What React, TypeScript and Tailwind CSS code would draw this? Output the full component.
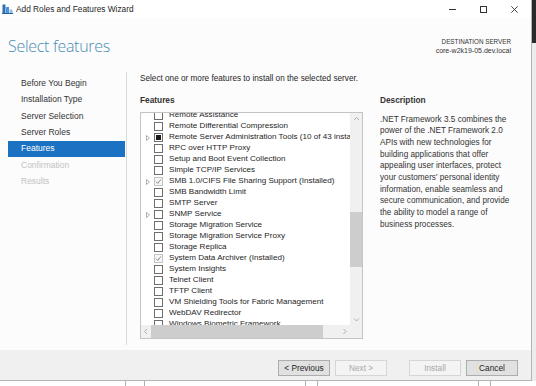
import React from 'react'

const steps = [
  { label: 'Before You Begin', state: 'done' },
  { label: 'Installation Type', state: 'done' },
  { label: 'Server Selection', state: 'done' },
  { label: 'Server Roles', state: 'done' },
  { label: 'Features', state: 'active' },
  { label: 'Confirmation', state: 'off' },
  { label: 'Results', state: 'off' },
]

type Feature = { label: string; expand?: boolean; check?: 'partial' | 'installed' }

const features: Feature[] = [
  { label: 'Remote Assistance' },
  { label: 'Remote Differential Compression' },
  { label: 'Remote Server Administration Tools (10 of 43 installed)', expand: true, check: 'partial' },
  { label: 'RPC over HTTP Proxy' },
  { label: 'Setup and Boot Event Collection' },
  { label: 'Simple TCP/IP Services' },
  { label: 'SMB 1.0/CIFS File Sharing Support (Installed)', expand: true, check: 'installed' },
  { label: 'SMB Bandwidth Limit' },
  { label: 'SMTP Server' },
  { label: 'SNMP Service', expand: true },
  { label: 'Storage Migration Service' },
  { label: 'Storage Migration Service Proxy' },
  { label: 'Storage Replica' },
  { label: 'System Data Archiver (Installed)', check: 'installed' },
  { label: 'System Insights' },
  { label: 'Telnet Client' },
  { label: 'TFTP Client' },
  { label: 'VM Shielding Tools for Fabric Management' },
  { label: 'WebDAV Redirector' },
  { label: 'Windows Biometric Framework' },
]

const description = [
  '.NET Framework 3.5 combines the',
  'power of the .NET Framework 2.0',
  'APIs with new technologies for',
  'building applications that offer',
  'appealing user interfaces, protect',
  "your customers' personal identity",
  'information, enable seamless and',
  'secure communication, and provide',
  'the ability to model a range of',
  'business processes.',
]

function Checkbox({ check }: { check?: 'partial' | 'installed' }) {
  if (check === 'installed') {
    return (
      <span className="flex h-[9px] w-[9px] shrink-0 items-center justify-center border border-[#c4c4c4] bg-[#f7f7f7]">
        <svg width="7" height="7" viewBox="0 0 7 7">
          <path d="M1 3.6 L2.8 5.4 L6 1.4" fill="none" stroke="#8a8a8a" strokeWidth="1" />
        </svg>
      </span>
    )
  }
  return (
    <span className="flex h-[9px] w-[9px] shrink-0 items-center justify-center border border-[#6e6e6e] bg-white">
      {check === 'partial' && <span className="h-[5px] w-[5px] bg-[#1a1a1a]" />}
    </span>
  )
}

function Chevron({ dir }: { dir: 'up' | 'down' | 'left' | 'right' }) {
  const d = {
    up: 'M1 4 L3.5 1.5 L6 4',
    down: 'M1 1.5 L3.5 4 L6 1.5',
    left: 'M4 1 L1.5 3.5 L4 6',
    right: 'M1.5 1 L4 3.5 L1.5 6',
  }[dir]
  const horiz = dir === 'left' || dir === 'right'
  return (
    <svg width={horiz ? 6 : 7} height={horiz ? 7 : 6} viewBox={horiz ? '0 0 6 7' : '0 0 7 6'}>
      <path d={d} fill="none" stroke="#a6a6a6" strokeWidth="0.9" />
    </svg>
  )
}

function WizardButton({ label, disabled }: { label: string; disabled?: boolean }) {
  return (
    <button
      className={`flex h-[16px] w-[52px] items-center justify-center border text-[8.3px] ${
        disabled ? 'border-[#d6d6d6] bg-[#f4f4f4] text-[#a8a8a8]' : 'border-[#adadad] bg-[#e1e1e1] text-[#1e1e1e]'
      }`}
    >
      {label}
    </button>
  )
}

export default function App() {
  return (
    <div className="flex h-[386px] w-[536px] flex-col overflow-hidden bg-white font-['Liberation_Sans',Arial,sans-serif] text-[#1e1e1e]">
      <div className="flex h-[381px]">
        {/* Window */}
        <div className="flex w-[532px] flex-col border-r border-b border-[#b4b4b4] bg-[#fcfcfc]">
          {/* Title bar */}
          <div className="flex h-[18px] items-center bg-white pl-[2px]">
            <svg width="11" height="10" viewBox="0 0 11 10" className="mr-[3px]">
              <rect x="0.5" y="0.5" width="3" height="9" fill="#2f6fb8" />
              <rect x="4" y="3" width="3" height="6.5" fill="#4e93d6" />
              <rect x="7.5" y="5.5" width="3" height="4" fill="#8cc0ec" />
              <rect x="0" y="9" width="11" height="1" fill="#2a5d99" />
            </svg>
            <span className="text-[8.3px] text-[#1e1e1e]">Add Roles and Features Wizard</span>
            <div className="ml-auto flex h-full items-center gap-[24px] pr-[13px]">
              <span className="h-[1px] w-[7px] bg-[#333]" />
              <span className="h-[7px] w-[7px] border border-[#333]" />
              <svg width="7" height="7" viewBox="0 0 7 7">
                <path d="M0.3 0.3 L6.7 6.7 M6.7 0.3 L0.3 6.7" stroke="#333" strokeWidth="0.9" />
              </svg>
            </div>
          </div>

          {/* Header */}
          <div className="flex h-[52px] items-start justify-between pl-[8px] pr-[20px]">
            <h1 className="pt-[19px] text-[16px] leading-[19px] font-light tracking-[-0.3px] text-[#4a8db5] font-['Open_Sans',sans-serif]">
              Select features
            </h1>
            <div className="pt-[20px] text-right text-[6.3px] leading-[8.5px] text-[#333]">
              <div>DESTINATION SERVER</div>
              <div className="text-[7px]">core-w2k19-05.dev.local</div>
            </div>
          </div>

          {/* Body */}
          <div className="flex h-[280px]">
            <nav className="mt-[2px] mb-[5px] w-[127px] border-r border-[#dadada] pt-[3px]">
              {steps.map((s) => (
                <div
                  key={s.label}
                  className={`ml-[8px] flex h-[16.4px] w-[117px] items-center pl-[13px] text-[8.5px] ${
                    s.state === 'active' ? 'bg-[#1c72c2] text-white' : s.state === 'off' ? 'text-[#c2c2c2]' : 'text-[#333]'
                  }`}
                >
                  {s.label}
                </div>
              ))}
            </nav>

            <div className="flex flex-1 flex-col pl-[13px]">
              <p className="mt-[3px] text-[8.2px] leading-[12px]">Select one or more features to install on the selected server.</p>
              <div className="mt-[9px] flex gap-[17px]">
                <div className="flex w-[223px] flex-col">
                  <div className="text-[8.3px] leading-[12px] font-bold text-[#333]">Features</div>
                  <div className="mt-[6px] flex h-[227px] flex-col border border-[#c4c4c4] bg-white">
                    <div className="flex flex-1 overflow-hidden">
                      <div className="flex-1 overflow-hidden">
                        <div className="mt-[-3px]">
                          {features.map((f) => (
                            <div key={f.label} className="flex h-[11px] items-center whitespace-nowrap">
                              <span className="flex w-[13px] shrink-0 justify-center pl-[1px]">
                                {f.expand && (
                                  <svg width="4" height="6" viewBox="0 0 4 6">
                                    <path d="M0.5 0.5 L3.5 3 L0.5 5.5 Z" fill="none" stroke="#9a9a9a" strokeWidth="0.8" />
                                  </svg>
                                )}
                              </span>
                              <Checkbox check={f.check} />
                              <span className="ml-[6px] text-[8.1px] text-[#1e1e1e]">{f.label}</span>
                            </div>
                          ))}
                        </div>
                      </div>
                      <div className="flex w-[12px] shrink-0 flex-col bg-[#f0f0f0]">
                        <div className="flex h-[11px] items-center justify-center">
                          <Chevron dir="up" />
                        </div>
                        <div className="mt-[88px] h-[55px] w-full bg-[#cdcdcd]" />
                        <div className="mt-auto flex h-[11px] items-center justify-center">
                          <Chevron dir="down" />
                        </div>
                      </div>
                    </div>
                    <div className="flex h-[13px] bg-[#f0f0f0]">
                      <div className="flex w-[10px] items-center justify-center">
                        <Chevron dir="left" />
                      </div>
                      <div className="w-[172px] bg-[#cdcdcd]" />
                      <div className="ml-auto mr-[12px] flex w-[11px] items-center justify-center">
                        <Chevron dir="right" />
                      </div>
                    </div>
                  </div>
                </div>

                <div className="flex flex-col">
                  <div className="text-[8.3px] leading-[12px] font-bold text-[#333]">Description</div>
                  <div className="mt-[7.5px] text-[8.2px] leading-[11.67px] whitespace-nowrap text-[#333]">
                    {description.map((line) => (
                      <div key={line}>{line}</div>
                    ))}
                  </div>
                </div>
              </div>
            </div>
          </div>

          {/* Footer */}
          <div className="flex flex-1 items-start justify-end bg-[#f0f0f0] pt-[10px] pr-[13px]">
            <div className="flex gap-[5px]">
              <WizardButton label="< Previous" />
              <WizardButton label="Next >" disabled />
            </div>
            <div className="ml-[22px] flex gap-[5px]">
              <WizardButton label="Install" disabled />
              <WizardButton label="Cancel" />
            </div>
          </div>
        </div>

        {/* Background window edge */}
        <div className="flex w-[4px] flex-col">
          <div className="h-[43px] bg-[#2a2a2a]" />
          <div className="flex-1 bg-[#ececec]" />
        </div>
      </div>

      {/* Background content below the window */}
      <div className="flex flex-1 bg-white">
        <div className="ml-[125px] w-px bg-[#b0b0b0]" />
        <div className="ml-[18px] w-px bg-[#b0b0b0]" />
        <div className="ml-[160px] w-px bg-[#b0b0b0]" />
        <div className="ml-[11px] w-px bg-[#b0b0b0]" />
        <div className="ml-[160px] w-px bg-[#b0b0b0]" />
        <div className="ml-[11px] w-px bg-[#b0b0b0]" />
      </div>
    </div>
  )
}
